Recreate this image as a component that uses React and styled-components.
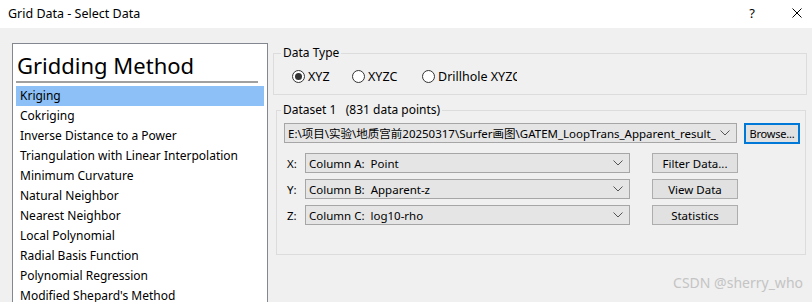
import React, { useState } from "react";
import styled, { createGlobalStyle } from "styled-components";

const GlobalStyle = createGlobalStyle`
  html, body {
    margin: 0;
    padding: 0;
    background: #f0f0f0;
    font-family: "Noto Sans", "Noto Sans CJK SC", sans-serif;
    font-size: 12px;
    color: #000;
    overflow: hidden;
  }
`;

const methods = [
  "Kriging",
  "Cokriging",
  "Inverse Distance to a Power",
  "Triangulation with Linear Interpolation",
  "Minimum Curvature",
  "Natural Neighbor",
  "Nearest Neighbor",
  "Local Polynomial",
  "Radial Basis Function",
  "Polynomial Regression",
  "Modified Shepard's Method",
];

const columns = [
  { axis: "X:", value: "Column A:  Point", button: "Filter Data..." },
  { axis: "Y:", value: "Column B:  Apparent-z", button: "View Data" },
  { axis: "Z:", value: "Column C:  log10-rho", button: "Statistics" },
];

function Chevron() {
  return (
    <svg width="10" height="6" viewBox="0 0 10 6">
      <polyline points="0.5,0.5 5,5 9.5,0.5" fill="none" stroke="#555" strokeWidth="1" />
    </svg>
  );
}

function App() {
  const [method, setMethod] = useState("Kriging");
  const [dataType, setDataType] = useState("XYZ");

  return (
    <Window>
      <GlobalStyle />
      <TitleBar>
        <Title>Grid Data - Select Data</Title>
        <TitleButtons>
          <span>?</span>
          <CloseIcon viewBox="0 0 10 10">
            <path d="M0.5,0.5 L9.5,9.5 M9.5,0.5 L0.5,9.5" stroke="#000" strokeWidth="1" />
          </CloseIcon>
        </TitleButtons>
      </TitleBar>

      <Body>
        <MethodPanel>
          <Heading>Gridding Method</Heading>
          <MethodList>
            {methods.map((m) => (
              <MethodItem key={m} $active={m === method} onClick={() => setMethod(m)}>
                {m}
              </MethodItem>
            ))}
          </MethodList>
        </MethodPanel>

        <RightColumn>
          <TypeGroup>
            <Legend $left={7}>Data Type</Legend>
            <RadioRow>
              {[
                ["XYZ", 60],
                ["XYZC", 70],
                ["Drillhole XYZC", 95],
              ].map(([t, w]) => (
                <Radio key={t} $w={w} onClick={() => setDataType(t)}>
                  <RadioDot $checked={dataType === t} />
                  <span>{t}</span>
                </Radio>
              ))}
            </RadioRow>
          </TypeGroup>

          <DatasetGroup>
            <Legend $left={4}>{"Dataset 1   (831 data points)"}</Legend>
            <DatasetBody>
              <FileRow>
                <Combo $w={453}>
                  <ComboText>
                    E:\项目\实验\地质宫前20250317\Surfer画图\GATEM_LoopTrans_Apparent_result_ML_1.dat
                  </ComboText>
                  <Chevron />
                </Combo>
                <BrowseButton>Browse...</BrowseButton>
              </FileRow>
              {columns.map((c) => (
                <ColumnRow key={c.axis}>
                  <Axis>{c.axis}</Axis>
                  <Combo $w={325}>
                    <ComboText>{c.value}</ComboText>
                    <Chevron />
                  </Combo>
                  <Button>{c.button}</Button>
                </ColumnRow>
              ))}
            </DatasetBody>
          </DatasetGroup>
        </RightColumn>
      </Body>

      <Watermark>CSDN @sherry_who</Watermark>
    </Window>
  );
}

const Window = styled.div`
  position: relative;
  width: 812px;
  height: 302px;
  overflow: hidden;
`;

const TitleBar = styled.div`
  height: 28px;
  background: #fff;
  display: flex;
  align-items: center;
  justify-content: space-between;
  padding: 0 0 2px 8px;
  box-sizing: border-box;
`;

const Title = styled.div`
  font-size: 12.5px;
`;

const TitleButtons = styled.div`
  display: flex;
  align-items: center;
  gap: 37px;
  padding-right: 10px;
  font-size: 13px;
`;

const CloseIcon = styled.svg`
  width: 10px;
  height: 10px;
`;

const Body = styled.div`
  display: flex;
  padding: 15px 0 0 12px;
`;

const MethodPanel = styled.div`
  width: 256px;
  height: 280px;
  box-sizing: border-box;
  background: #fff;
  border: 1px solid #828790;
  padding: 0 3px;
  flex-shrink: 0;
`;

const Heading = styled.div`
  font-size: 22px;
  line-height: 31px;
  padding: 6px 0 0 1px;
  margin-right: 6px;
  border-bottom: 2px solid #a0a0a0;
`;

const MethodList = styled.div`
  padding-top: 3px;
`;

const MethodItem = styled.div`
  height: 20px;
  line-height: 20px;
  padding-left: 4px;
  font-size: 12px;
  background: ${(p) => (p.$active ? "#8cc0f6" : "transparent")};
  white-space: nowrap;
  cursor: default;
`;

const RightColumn = styled.div`
  margin-left: 5px;
  width: 534px;
  padding-top: 3px;
  display: flex;
  flex-direction: column;
  gap: 8px;
`;

const Legend = styled.legend`
  padding: 0 2px;
  margin-left: ${(p) => p.$left}px;
  font-size: 12px;
  line-height: 14px;
  white-space: pre;
`;

const TypeGroup = styled.fieldset`
  margin: 0;
  height: 49px;
  box-sizing: border-box;
  border: 1px solid #dcdcdc;
  padding: 0;
`;

const RadioRow = styled.div`
  display: flex;
  align-items: center;
  height: 30px;
  margin-top: 1px;
  padding-left: 18px;
`;

const Radio = styled.label`
  display: flex;
  align-items: center;
  gap: 3px;
  width: ${(p) => p.$w}px;
  overflow: hidden;
  white-space: nowrap;
  font-size: 12.5px;
  cursor: default;
`;

const RadioDot = styled.span`
  width: 13px;
  height: 13px;
  flex-shrink: 0;
  box-sizing: border-box;
  border-radius: 50%;
  border: 1px solid #333;
  background: #fff;
  display: flex;
  align-items: center;
  justify-content: center;
  &::after {
    content: "";
    width: 7px;
    height: 7px;
    border-radius: 50%;
    background: ${(p) => (p.$checked ? "#333" : "transparent")};
  }
`;

const DatasetGroup = styled.fieldset`
  margin: 0 1px 0 3px;
  height: 152px;
  box-sizing: border-box;
  border: 1px solid #dcdcdc;
  padding: 0;
`;

const DatasetBody = styled.div`
  padding: 6px 0 0 7px;
  display: flex;
  flex-direction: column;
  gap: 6px;
`;

const FileRow = styled.div`
  display: flex;
  align-items: flex-start;
  gap: 7px;
  margin-bottom: 3px;
`;

const ColumnRow = styled.div`
  display: flex;
  align-items: center;
  height: 20px;
`;

const Axis = styled.div`
  width: 18px;
  padding-left: 3px;
  font-size: 11.5px;
`;

const Combo = styled.div`
  width: ${(p) => p.$w}px;
  height: 20px;
  box-sizing: border-box;
  background: #e5e5e5;
  border: 1px solid #a6a6a6;
  display: flex;
  align-items: center;
  padding: 0 6px 0 3px;
  gap: 4px;
`;

const ComboText = styled.div`
  flex: 1;
  overflow: hidden;
  white-space: pre;
  font-size: 11.5px;
`;

const Button = styled.div`
  width: 86px;
  height: 20px;
  margin-left: 22px;
  box-sizing: border-box;
  background: #e1e1e1;
  border: 1px solid #adadad;
  display: flex;
  align-items: center;
  justify-content: center;
  font-size: 11.5px;
  white-space: nowrap;
`;

const BrowseButton = styled(Button)`
  width: 56px;
  height: 21px;
  margin-left: 0;
  border: 2px solid #0078d7;
  font-size: 11px;
  letter-spacing: -0.2px;
`;

const Watermark = styled.div`
  position: absolute;
  right: 9px;
  bottom: 10px;
  color: #c4c4c4;
  font-size: 14px;
`;

export default App;
